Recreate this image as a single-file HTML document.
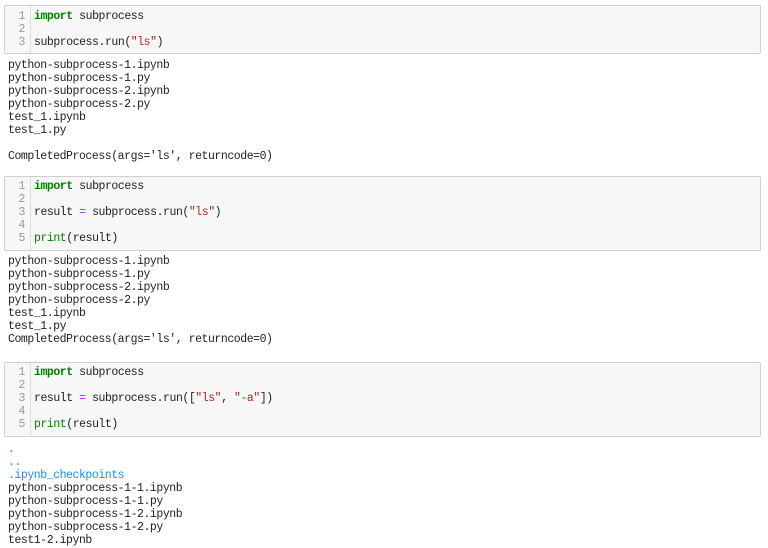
<!DOCTYPE html>
<html><head><style>
body{margin:0;width:768px;height:548px;background:#fff;overflow:hidden;font-family:"Liberation Mono",monospace;font-size:11.5px;letter-spacing:-0.45px;color:#222;position:relative}
.cell{position:absolute;left:4px;width:755px;background:#f7f7f7;border:1px solid #cfcfcf;border-radius:2px}
.g{position:absolute;left:0;top:0;bottom:0;width:25px;border-right:1px solid #ddd;background:#f7f7f7}
.ln{position:absolute;left:0;width:20px;text-align:right;color:#999;line-height:13px}
.code{position:absolute;left:29px;line-height:13px;white-space:pre}
.out{position:absolute;left:8px;line-height:13px;white-space:pre}
.k{color:#008000;font-weight:bold}.s{color:#ba2121}.o{color:#aa22ff}.b{color:#008000}.bl{color:#1a8fe6}
</style></head><body>
<div class="cell" style="top:5px;height:47px"><div class="g"></div>
<div class="ln" style="top:4px">1<br>2<br>3</div>
<div class="code" style="top:4px"><span class="k">import</span> subprocess

subprocess.run(<span class="s">"ls"</span>)</div></div>
<div class="out" style="top:59px">python-subprocess-1.ipynb
python-subprocess-1.py
python-subprocess-2.ipynb
python-subprocess-2.py
test_1.ipynb
test_1.py

CompletedProcess(args='ls', returncode=0)</div>

<div class="cell" style="top:176px;height:73px"><div class="g"></div>
<div class="ln" style="top:3px">1<br>2<br>3<br>4<br>5</div>
<div class="code" style="top:3px"><span class="k">import</span> subprocess

result <span class="o">=</span> subprocess.run(<span class="s">"ls"</span>)

<span class="b">print</span>(result)</div></div>
<div class="out" style="top:255px">python-subprocess-1.ipynb
python-subprocess-1.py
python-subprocess-2.ipynb
python-subprocess-2.py
test_1.ipynb
test_1.py
CompletedProcess(args='ls', returncode=0)</div>

<div class="cell" style="top:362px;height:73px"><div class="g"></div>
<div class="ln" style="top:3px">1<br>2<br>3<br>4<br>5</div>
<div class="code" style="top:3px"><span class="k">import</span> subprocess

result <span class="o">=</span> subprocess.run([<span class="s">"ls"</span>, <span class="s">"-a"</span>])

<span class="b">print</span>(result)</div></div>
<div class="out" style="top:443px"><span class="bl">.
..
.ipynb_checkpoints</span>
python-subprocess-1-1.ipynb
python-subprocess-1-1.py
python-subprocess-1-2.ipynb
python-subprocess-1-2.py
test1-2.ipynb</div>
</body></html>
